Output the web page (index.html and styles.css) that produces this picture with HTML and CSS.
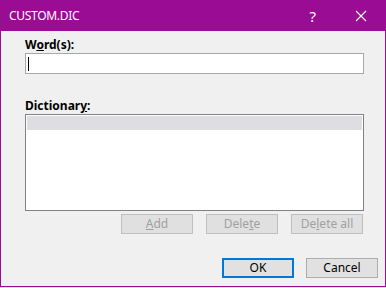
FILE: index.html
```html
<!DOCTYPE html>
<html lang="en">
  <head>
    <meta charset="UTF-8" />
    <title>CUSTOM.DIC</title>
    <link rel="stylesheet" href="styles.css">
  </head>
  <body>
    <div class="window">
      <div class="titlebar">
        <span class="title">CUSTOM.DIC</span>
        <span class="help">?</span>
        <svg class="close" width="12" height="12" viewBox="0 0 12 12">
          <path d="M1 1 L11 11 M11 1 L1 11" stroke="#fff" stroke-width="1.2" fill="none" />
        </svg>
      </div>
      <div class="content">
        <label class="label" for="words">W<u>o</u>rd(s):</label>
        <div class="input" id="words"><span class="caret"></span></div>

        <div class="label dict-label">Dictionar<u>y</u>:</div>
        <div class="list">
          <div class="row selected"></div>
        </div>

        <div class="actions">
          <button class="btn" disabled><u>A</u>dd</button>
          <button class="btn" disabled>Dele<u>t</u>e</button>
          <button class="btn" disabled>De<u>l</u>ete all</button>
        </div>
      </div>
      <div class="footer">
        <button class="btn btn-default">OK</button>
        <button class="btn">Cancel</button>
      </div>
    </div>
  </body>
</html>
```
FILE: styles.css
```css
body {
  margin: 0;
  padding: 0;
  background-color: #f0f0f0;
  font-family: "Noto Sans", "Open Sans", sans-serif;
  font-size: 12px;
  color: #000;
}
.window {
  width: 386px;
  height: 287px;
  box-sizing: border-box;
  border: 1px solid #9a0c93;
  border-top: none;
  background-color: #f0f0f0;
  display: flex;
  flex-direction: column;
}
.titlebar {
  height: 31px;
  margin: 0 -1px;
  background-color: #9a0c93;
  color: #fff;
  display: flex;
  align-items: center;
}
.title {
  flex: 1;
  padding-left: 9px;
  font-size: 12px;
  letter-spacing: -0.3px;
}
.help {
  font-size: 15px;
  margin-right: 39px;
}
.close {
  margin-right: 19px;
}
.content {
  padding: 6px 21px 0 24px;
}
.label {
  display: block;
  font-weight: bold;
  line-height: 16px;
  height: 16px;
}
.input {
  height: 21px;
  box-sizing: border-box;
  border: 1px solid #a8a8a8;
  background-color: #fff;
  padding: 3px 0 0 2px;
}
.caret {
  display: block;
  width: 1px;
  height: 14px;
  background-color: #000;
}
.dict-label {
  margin-top: 24px;
}
.list {
  height: 97px;
  box-sizing: border-box;
  border: 1px solid #828282;
  background-color: #fff;
  padding: 1px;
}
.row {
  height: 14px;
}
.row.selected {
  background-color: #dedee2;
}
.actions {
  display: flex;
  justify-content: flex-end;
  gap: 13px;
  margin-top: 3px;
  padding-right: 1px;
}
.btn {
  width: 72px;
  height: 20px;
  box-sizing: border-box;
  padding: 0;
  border: 1px solid #adadad;
  background-color: #e1e1e1;
  font-family: inherit;
  font-size: 12px;
  color: #000;
  line-height: 16px;
}
.btn:disabled {
  border-color: #bfbfbf;
  background-color: #e0e0e0;
  color: #a0a0a0;
}
.footer {
  display: flex;
  justify-content: flex-end;
  gap: 12px;
  padding: 0 7px 0 0;
  margin-top: 24px;
}
.btn-default {
  border: 2px solid #0078d7;
}
```
